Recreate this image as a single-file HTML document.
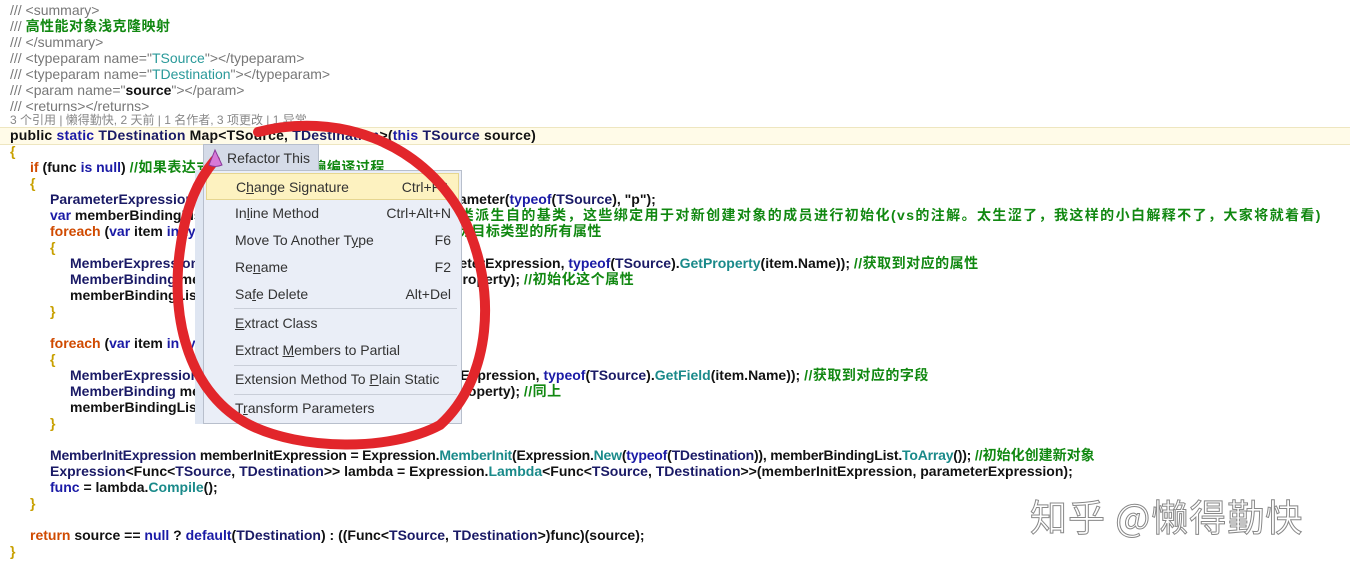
<!DOCTYPE html>
<html><head><meta charset="utf-8"><style>
body{margin:0;width:1350px;height:568px;overflow:hidden;background:#fff;position:relative;font-family:"Liberation Sans","Noto Sans CJK SC",sans-serif}
.l{position:absolute;white-space:pre;font-size:14px;line-height:16px;color:#111;font-weight:bold;letter-spacing:0px}
.g{color:#777;font-weight:normal}.c{color:#118811;font-weight:bold;letter-spacing:0.5px}.k{color:#1a1aa6}.t{color:#1a1a66}.s{color:#2a9a9a;font-weight:normal}.o{color:#c8a000}.m{color:#1a8a8a}.r{color:#d04a00}
.menu{position:absolute;left:203px;top:170px;width:257px;height:252px;background:#eaeef7;border:1px solid #b8bfcc;font-size:14px;color:#333}
.it{position:absolute;left:0;width:257px;height:27px;line-height:27px}
.it span{position:absolute;left:31px}.it b{position:absolute;right:10px;font-weight:normal}
.sep{position:absolute;left:30px;right:4px;height:1px;background:#c9ced8}
</style></head><body>
<div style="position:absolute;left:0;top:127px;width:1350px;height:16px;background:#fffbe8;border-top:1px solid #eee6c0;border-bottom:1px solid #eee6c0"></div>
<div class="l" style="left:10px;top:2px"><span class="g">/// &lt;summary&gt;</span></div>
<div class="l" style="left:10px;top:18px"><span class="g">/// </span><span class="c">高性能对象浅克隆映射</span></div>
<div class="l" style="left:10px;top:34px"><span class="g">/// &lt;/summary&gt;</span></div>
<div class="l" style="left:10px;top:50px"><span class="g">/// &lt;typeparam name="</span><span class="s">TSource</span><span class="g">"&gt;&lt;/typeparam&gt;</span></div>
<div class="l" style="left:10px;top:66px"><span class="g">/// &lt;typeparam name="</span><span class="s">TDestination</span><span class="g">"&gt;&lt;/typeparam&gt;</span></div>
<div class="l" style="left:10px;top:82px"><span class="g">/// &lt;param name="</span><b>source</b><span class="g">"&gt;&lt;/param&gt;</span></div>
<div class="l" style="left:10px;top:98px"><span class="g">/// &lt;returns&gt;&lt;/returns&gt;</span></div>
<div class="l" style="left:10px;top:112px;font-size:12px;color:#888;font-weight:normal">3 个引用 | 懒得勤快, 2 天前 | 1 名作者, 3 项更改 | 1 异常</div>
<div class="l" style="left:10px;top:127px;letter-spacing:0.2px"><span>public </span><span class="k">static </span><span class="t">TDestination</span> Map&lt;TSource, <span class="t">TDestination</span>&gt;(<span class="k">this </span><span class="t">TSource</span> source)</div>
<div class="l o" style="left:10px;top:143px">{</div>
<div class="l" style="left:30px;top:159px"><span class="r">if</span> (func <span class="k">is null</span>) <span class="c">//如果表达式不存在，则走一遍编译过程</span></div>
<div class="l o" style="left:30px;top:175px">{</div>
<div class="l" style="left:50px;top:191px"><span class="t">ParameterExpression</span> parameterExpression = Expression.Parameter(<span class="k">typeof</span>(<span class="t">TSource</span>), "p");</div>
<div class="l" style="left:50px;top:207px"><span class="k">var</span> memberBindingList = <span class="k">new</span> List&lt;MemberBinding&gt;(); <span class="c" style="letter-spacing:1.4px">//提供类派生自的基类，这些绑定用于对新创建对象的成员进行初始化(vs的注解。太生涩了，我这样的小白解释不了，大家将就着看)</span></div>
<div class="l" style="left:50px;top:223px"><span class="r">foreach</span> (<span class="k">var</span> item <span class="k">in</span> <span class="k">typeof</span>(<span class="t">TDestination</span>).GetProperties()) <span class="c">//遍历目标类型的所有属性</span></div>
<div class="l o" style="left:50px;top:239px">{</div>
<div class="l" style="left:70px;top:255px"><span class="t">MemberExpression</span> property = Expression.Property(parameterExpression, <span class="k">typeof</span>(<span class="t">TSource</span>).<span class="m">GetProperty</span>(item.Name)); <span class="c">//获取到对应的属性</span></div>
<div class="l" style="left:70px;top:271px"><span class="t">MemberBinding</span> memberBinding = Expression.Bind(item, property); <span class="c">//初始化这个属性</span></div>
<div class="l" style="left:70px;top:287px">memberBindingList.Add(memberBinding);</div>
<div class="l o" style="left:50px;top:303px">}</div>
<div class="l" style="left:50px;top:335px"><span class="r">foreach</span> (<span class="k">var</span> item <span class="k">in</span> <span class="k">typeof</span>(<span class="t">TDestination</span>).GetFields())</div>
<div class="l o" style="left:50px;top:351px">{</div>
<div class="l" style="left:70px;top:367px"><span class="t">MemberExpression</span> property = Expression.Field(parameterExpression, <span class="k">typeof</span>(<span class="t">TSource</span>).<span class="m">GetField</span>(item.Name)); <span class="c">//获取到对应的字段</span></div>
<div class="l" style="left:70px;top:383px"><span class="t">MemberBinding</span> memberBinding = Expression.Bind(item, property); <span class="c">//同上</span></div>
<div class="l" style="left:70px;top:399px">memberBindingList.Add(memberBinding);</div>
<div class="l o" style="left:50px;top:415px">}</div>
<div class="l" style="left:50px;top:447px;letter-spacing:-0.2px"><span class="t">MemberInitExpression</span> memberInitExpression = Expression.<span class="m">MemberInit</span>(Expression.<span class="m">New</span>(<span class="k">typeof</span>(<span class="t">TDestination</span>)), memberBindingList.<span class="m">ToArray</span>()); <span class="c" style="letter-spacing:0">//初始化创建新对象</span></div>
<div class="l" style="left:50px;top:463px"><span class="t">Expression</span>&lt;Func&lt;<span class="t">TSource</span>, <span class="t">TDestination</span>&gt;&gt; lambda = Expression.<span class="m">Lambda</span>&lt;Func&lt;<span class="t">TSource</span>, <span class="t">TDestination</span>&gt;&gt;(memberInitExpression, parameterExpression);</div>
<div class="l" style="left:50px;top:479px"><span class="k">func</span> = lambda.<span class="m">Compile</span>();</div>
<div class="l o" style="left:30px;top:495px">}</div>
<div class="l" style="left:30px;top:527px"><span class="r">return</span> source == <span class="k">null</span> ? <span class="k">default</span>(<span class="t">TDestination</span>) : ((Func&lt;<span class="t">TSource</span>, <span class="t">TDestination</span>&gt;)func)(source);</div>
<div class="l o" style="left:10px;top:543px">}</div>

<div style="position:absolute;left:195px;top:170px;width:8px;height:254px;background:#dfe6f2"></div>
<div style="position:absolute;left:203px;top:144px;width:114px;height:27px;background:#d5dbe8;border:1px solid #b8bfcc;border-bottom:none;font-size:14px;color:#333;line-height:27px">
<span style="position:absolute;left:23px">Refactor This</span></div>
<div class="menu">
<div class="it" style="top:2px;background:#fdf2c0;border:1px solid #e6d690;box-sizing:border-box;left:2px;width:253px"><span style="left:29px">C<u>h</u>ange Signature</span><b>Ctrl+F6</b></div>
<div class="it" style="top:29px"><span>In<u>l</u>ine Method</span><b>Ctrl+Alt+N</b></div>
<div class="it" style="top:56px"><span>Move To Another T<u>y</u>pe</span><b>F6</b></div>
<div class="it" style="top:83px"><span>Re<u>n</u>ame</span><b>F2</b></div>
<div class="it" style="top:110px"><span>Sa<u>f</u>e Delete</span><b>Alt+Del</b></div>
<div class="sep" style="top:137px"></div>
<div class="it" style="top:139px"><span><u>E</u>xtract Class</span></div>
<div class="it" style="top:166px"><span>Extract <u>M</u>embers to Partial</span></div>
<div class="sep" style="top:194px"></div>
<div class="it" style="top:195px"><span>Extension Method To <u>P</u>lain Static</span></div>
<div class="sep" style="top:223px"></div>
<div class="it" style="top:224px"><span>T<u>r</u>ansform Parameters</span></div>
</div>
<svg style="position:absolute;left:0;top:0" width="1350" height="568"><path d="M258 132 C335 112 420 140 462 215 C500 290 490 380 440 425 C390 452 300 450 250 425 C190 395 170 320 180 250 C186 205 198 180 215 160" fill="none" stroke="#e2262b" stroke-width="10" stroke-linecap="round"/>
<path d="M209 165 L215 150 L222 165 Q215 168 209 165 Z" fill="#d77ad8" stroke="#8a3a9a"/></svg>
<div style="position:absolute;left:1030px;top:488px;font-size:37px;color:#fff;-webkit-text-stroke:1px #888;font-family:'Noto Sans CJK SC',sans-serif;white-space:pre;letter-spacing:1px">知乎 @懒得勤快</div>
</body></html>
